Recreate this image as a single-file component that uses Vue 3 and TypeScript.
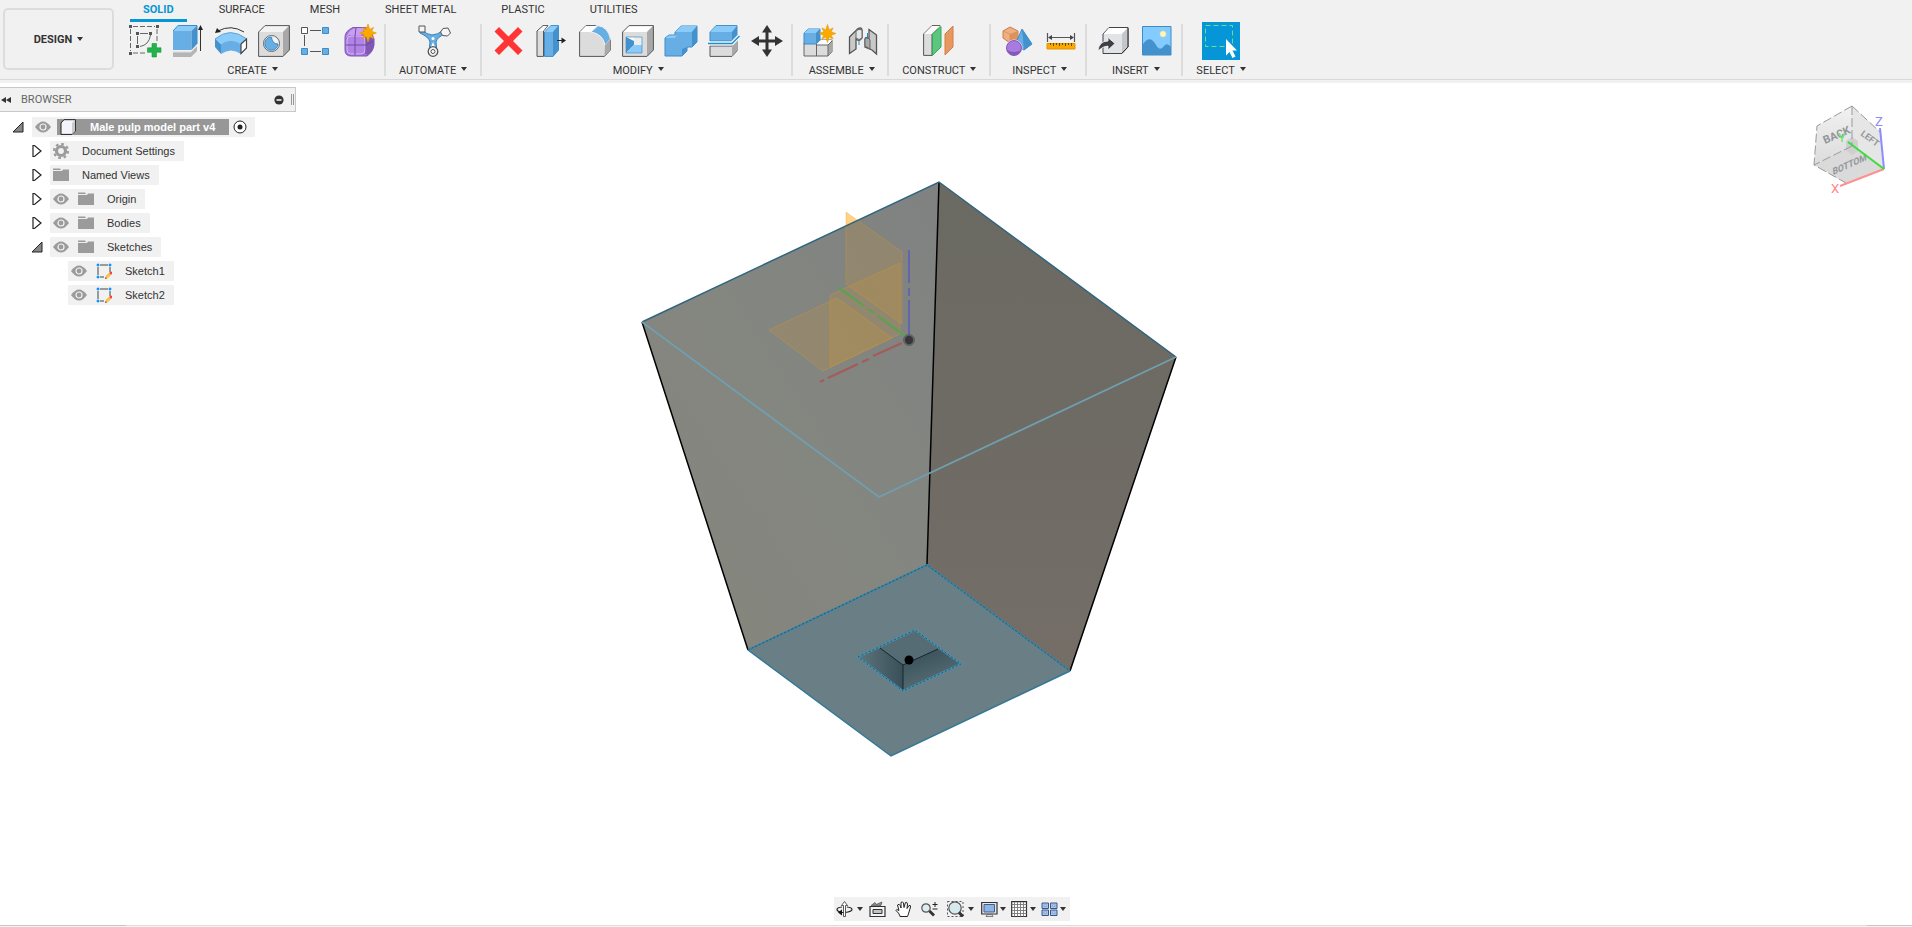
<script setup lang="ts">
import { ref } from 'vue'

interface Group {
  label: string
  kind: string
  tools: string[]
}

interface TreeRow {
  label: string
  level: number
  open: boolean | null
  icons: string[]
}

interface NavTool {
  icon: string
  label: string
  menu: boolean
}

const tabs = ['SOLID', 'SURFACE', 'MESH', 'SHEET METAL', 'PLASTIC', 'UTILITIES']
const activeTab = ref('SOLID')

const groups: Group[] = [
  { label: 'CREATE', kind: 'wide', tools: ['sketch', 'extrude', 'revolve', 'hole', 'pattern', 'form'] },
  { label: 'AUTOMATE', kind: 'single', tools: ['automate'] },
  { label: 'MODIFY', kind: 'wide', tools: ['remove', 'presspull', 'fillet', 'shell', 'combine', 'split', 'move'] },
  { label: 'ASSEMBLE', kind: 'wide', tools: ['component', 'joint'] },
  { label: 'CONSTRUCT', kind: 'single', tools: ['plane'] },
  { label: 'INSPECT', kind: 'wide', tools: ['inspect', 'measure'] },
  { label: 'INSERT', kind: 'wide', tools: ['insert', 'picture'] },
  { label: 'SELECT', kind: 'last', tools: ['select'] },
]

const rows: TreeRow[] = [
  { label: 'Document Settings', level: 1, open: false, icons: ['gear'] },
  { label: 'Named Views', level: 1, open: false, icons: ['folder'] },
  { label: 'Origin', level: 1, open: false, icons: ['eye', 'folder'] },
  { label: 'Bodies', level: 1, open: false, icons: ['eye', 'folder'] },
  { label: 'Sketches', level: 1, open: true, icons: ['eye', 'folder'] },
  { label: 'Sketch1', level: 2, open: null, icons: ['eye', 'profile'] },
  { label: 'Sketch2', level: 2, open: null, icons: ['eye', 'profile'] },
]

const navTools: NavTool[] = [
  { icon: 'orbit', label: 'Orbit', menu: true },
  { icon: 'lookat', label: 'Look at', menu: false },
  { icon: 'pan', label: 'Pan', menu: false },
  { icon: 'zoom', label: 'Zoom', menu: false },
  { icon: 'fit', label: 'Fit', menu: true },
  { icon: 'display', label: 'Display settings', menu: true },
  { icon: 'grid', label: 'Grid and snaps', menu: true },
  { icon: 'viewports', label: 'Viewports', menu: true },
]

const star = 'M0-9L1.7-3.6 5.6-5.6 3.6-1.7 8.4 0 3.6 1.7 5.6 5.6 1.7 3.6 0 9-1.7 3.6-5.6 5.6-3.6 1.7-8.4 0-3.6-1.7-5.6-5.6-1.7-3.6z'

const toolArt: Record<string, string> = {
  sketch: `<path d="M4 1.5H26M28 4V18M1.5 4V26M4 28H17" stroke="#666" stroke-dasharray="5 2" fill="none"/>
    <path d="M8.500 19V11M11 8.500H19M21.500 10Q20 20 11 21.500" stroke="#666" fill="none"/>
    <path d="M0 0h3v3H0zM27 0h3v3h-3zM0 27h3v3H0zM7 7h3v3H7zM20 7h3v3h-3zM7 20h3v3H7z" fill="#555"/>
    <path d="M23 18.500h4.500v4.300H32v4.500h-4.500V32H23v-4.700h-4.500v-4.500H23z" fill="#23b24b" stroke="#149a3c" stroke-width=".6"/>`,
  extrude: `<path d="M1 27H19L25 21V26L19 32H1z" fill="#b5b5b5"/><path d="M1 27H19L25 21" stroke="#ddd" fill="none"/>
    <path d="M1 6H19.500V25H1z" fill="#67aee5"/><path d="M1 6L6 .5H25L19.500 6z" fill="#8bcbf9"/><path d="M19.500 6L25 .5V19L19.500 25z" fill="#4492cd"/>
    <path d="M1 6L6 .5H25V19" fill="none" stroke="#3c8cc8"/><path d="M28.500 26V4" stroke="#333"/><path d="M28.500 0L31 5h-5z" fill="#222"/>`,
  revolve: `<path d="M3 6Q16-1 29 7" fill="none" stroke="#333"/><path d="M0 8L2 3 6 7z" fill="#222"/>
    <path d="M0 14Q15 1 32 14L26 20Q16 13 6 20z" fill="#8bcbf9" stroke="#3c8cc8" stroke-width=".7"/>
    <path d="M0 14L6 20V29L0 22z" fill="#4492cd"/><path d="M6 20Q16 13 26 20V29Q16 22 6 29z" fill="#67aee5"/>
    <path d="M26 19L31.500 14V23L26 28.500z" fill="#fff" stroke="#444" stroke-width="1.2"/>`,
  hole: `<path d="M.6 7L7 .6H31.400V25L25 31.400H.6z" fill="#dcdcdc"/><path d="M.6 7L7 .6H31.400L25 7z" fill="#f3f3f3"/><path d="M25 7L31.400.6V25L25 31.400z" fill="#a8a8a8"/>
    <path d="M.6 7L7 .6H31.400V25L25 31.400H.6z" fill="none" stroke="#555"/><circle cx="13.500" cy="18.500" r="8" fill="#f2f2f2" stroke="#666"/>
    <path d="M13.500 12A6.600 6.600 0 1 0 20 19Q14 19 13.500 12z" fill="#67aee5" stroke="#3c8cc8"/>`,
  pattern: `<path d="M9 5.500H20M3.500 10V21M9 26.500H20" stroke="#555"/><path d="M.5 2.500h6v6h-6z" fill="#fff" stroke="#555"/>
    <path d="M21.500 2.500h6v6h-6zM.5 23.500h6v6h-6zM21.500 23.500h6v6h-6z" fill="#67aee5" stroke="#3c8cc8"/>`,
  form: `<path d="M1 12Q1 6 9 2.500H20Q26 2 30 14V20Q29 27 23 31H7Q1 31 1 25z" fill="#a173d8" stroke="#7f57b5"/>
    <path d="M1.500 13Q6 3 12 3H21L17 10H5z" fill="#c99df2"/><path d="M22 11L30 14V20Q29 27 23 30z" fill="#7f57b5"/>
    <rect x="3" y="11" width="18" height="18" rx="4" fill="#b183e6" stroke="#d7b8f5"/><path d="M12 3L11 11V30M2 20H22L29 16M22 11V29" stroke="#6e4b9e" fill="none"/>
    <path transform="translate(24 8)" d="${star}" fill="#fbab00" stroke="#e59400" stroke-width=".6"/>`,
  automate: `<path d="M4 4Q10 10 15 10T27 5L28 9Q20 12 19 17L20 27H12L13 17Q12 12 3 8z" fill="#67aee5" stroke="#397fae"/>
    <circle cx="16" cy="13.500" r="1.500" fill="#fff"/><path d="M16 17l2 5h-4z" fill="#fff"/><circle cx="16" cy="26.500" r="4.800" fill="#f4f4f4" stroke="#555" stroke-width="1.300"/><circle cx="16" cy="26.500" r="2" fill="#fff" stroke="#555"/>
    <path d="M2 1h6v6H2zM26 3.500l5-.5 2.500 5-3 3-5-.5-2-3.500z" fill="#f5f5f5" stroke="#555"/>`,
  remove: `<path d="M6 2L15.500 11.500 25 2l4.500 4.500L20 16l9.500 9.500L25 30l-9.500-9.500L6 30l-4.500-4.500L11 16 1.500 6.500z" fill="#ff3434"/>`,
  presspull: `<path d="M1 6L7 .6H12L7.500 6V31.400H1z" fill="#dcdcdc" stroke="#555"/><path d="M2 6L7.500 1H11L7 6z" fill="#fafafa"/>
    <path d="M8.500 7L15 .6H22.500L22.500 25 17 31.400H8.500z" fill="#67aee5" stroke="#3c8cc8"/><path d="M9 7L15 1H22.500L17 7z" fill="#8bcbf9"/><path d="M17 7L22.500.6V25L17 31.400z" fill="#4492cd"/>
    <path d="M21 15.500H27" stroke="#222"/><path d="M30 15.500L25.500 12.500v6z" fill="#222"/>`,
  fillet: `<path d="M.6 7L7 .6H16Q31 6 31.400 16V25L25.500 31.400H.6z" fill="#dcdcdc" stroke="#555"/><path d="M1 7L7 1H19L12 7z" fill="#fff"/>
    <path d="M12 7L19 .6Q29 2 31.500 14L26 20Q24 9 12 7z" fill="#67aee5" stroke="#f5f5f5"/><path d="M26 20L31.400 14V25L25.500 31.400z" fill="#a8a8a8"/>`,
  shell: `<path d="M.6 7L7 .6H31.400V25L25 31.400H.6z" fill="#dcdcdc"/><path d="M.6 7L7 .6H31.400L25 7z" fill="#fff"/><path d="M25 7L31.400.6V25L25 31.400z" fill="#a8a8a8"/>
    <path d="M.6 7L7 .6H31.400V25L25 31.400H.6z" fill="none" stroke="#555"/><path d="M4 12H20V28H4z" fill="#fff"/><path d="M4 12L12 16V20L4 28z" fill="#4492cd"/><path d="M12 12H20V20H12z" fill="#eee"/><path d="M4 28L12 20H20V28z" fill="#8bcbf9"/><path d="M4 12H20V28H4z" fill="none" stroke="#3c8cc8" stroke-width=".7"/>`,
  combine: `<path d="M0 13L4 10H10V7L16 1H32V17L27 22H22V26L17 31H0z" fill="#67aee5" stroke="#3c8cc8"/>
    <path d="M.5 13L4 10.500H12L9.500 13zM10 7L16 1H32L27 7z" fill="#8bcbf9"/><path d="M27 7L32 1V17L27 22zM17 24L22 22V26L17 31z" fill="#4492cd"/>`,
  split: `<path d="M2 7L8 .6H29V11L24 16H2z" fill="#67aee5" stroke="#3c8cc8"/><path d="M2 7L8 1H29L24 7z" fill="#8bcbf9"/><path d="M24 7L29 1V10L24 16z" fill="#4492cd"/>
    <path d="M2 21H24L29 15V26L24 31.400H2z" fill="#dcdcdc" stroke="#555"/><path d="M24 21L29 15V26L24 31z" fill="#a8a8a8"/><path d="M0 18.500H24L31.500 11" fill="none" stroke="#f5f5f5" stroke-width="4"/><path d="M0 18.500H24L31.500 11" fill="none" stroke="#1590d8" stroke-width="1.300"/>`,
  move: `<path d="M16 0L21 7.500H17.500V14.500H24V11L32 16 24 21V17.500H17.500V24.500H21L16 32 11 24.500H14.500V17.500H8V21L0 16 8 11V14.500H14.500V7.500H11z" fill="#333"/>`,
  component: `<path d="M0 18L4 15H28V27L24 31H0z" fill="#dcdcdc" stroke="#666"/><path d="M12 20L17 15H28L24 20z" fill="#fff"/><path d="M24 20L28 16V27L24 31z" fill="#a8a8a8"/><path d="M12.500 19V31M13 20H24L28 16M24 20V31" fill="none" stroke="#666"/>
    <path d="M0 8L4 4H16V15L12 19H0z" fill="#67aee5" stroke="#3c8cc8"/><path d="M0 8L4 4H16L12 8z" fill="#8bcbf9"/><path d="M12 8L16 4V15L12 19z" fill="#4492cd"/>
    <path transform="translate(23.500 8.500)" d="${star}" fill="#fbab00" stroke="#e59400" stroke-width=".6"/>`,
  joint: `<path d="M2.500 12L11 3.500Q15 2 15 5V13Q12 17 9 14V24L2.500 28.500z" fill="#c9c9c9" stroke="#555" stroke-width="1.300"/><path d="M9 6Q12 3 15 5V13Q12 16 9 13z" fill="#e6e6e6" stroke="#666"/>
    <path d="M29.500 10L22 4.500V14Q19 11 18 14V22L25 25 29.500 29z" fill="#c9c9c9" stroke="#555" stroke-width="1.300"/><path d="M18 14Q20 11 23 15V24L18 21z" fill="#aaa" stroke="#666"/><path d="M12 16V20M20.500 8V14" stroke="#1590d8"/>`,
  plane: `<path d="M.6 9L9 .6H17L9 9V30.400H.6z" fill="#dcdcdc" stroke="#555"/><path d="M1 9L9 1H17L9 9z" fill="#fafafa"/><path d="M9.500 9L18 1.500V22L9.500 30.400z" fill="#5cc67f" stroke="#36a95c"/><path d="M22 9L30 1V22L22 30z" fill="#e8975f" stroke="#d07e48"/>`,
  inspect: `<path d="M1 6L8 2 16 6V14L8 18 1 13z" fill="#eeb083" stroke="#cb7d4b"/><path d="M8 9L16 6V14L8 18z" fill="#dd925d"/><path d="M1 6L8 9V18" fill="none" stroke="#d98b56" stroke-width=".7"/>
    <path d="M20 4L30 19 22 25 13 20z" fill="#67aee5" stroke="#3c8cc8"/><path d="M20 4L30 19 22 25z" fill="#4492cd"/><circle cx="12" cy="23" r="8" fill="#a97be0" stroke="#f2f2f2"/><circle cx="12" cy="23" r="7.500" fill="none" stroke="#7f57b5"/><path d="M5 25Q12 29 19 25Q17 30 12 30T5 25z" fill="#8358bb"/>`,
  measure: `<path d="M2.500 8V17M29.500 8V17M4 12.500H28" stroke="#555" stroke-width="1.200"/><path d="M3 12.500L7 10v5zM29 12.500L25 10v5z" fill="#444"/><path d="M2 18.500H30V24H2z" fill="#fba800" stroke="#e39300"/><path d="M5.500 18v2M8.500 18v3M11.500 18v2M14.500 18v3M17.500 18v2M20.500 18v3M23.500 18v2M26.500 18v3" stroke="#6b4d00"/>`,
  insert: `<path d="M5 9L11 2.500H30V22L24 28.500H5z" fill="#e2e3e6" stroke="#444"/><path d="M5.500 9L11 3H29.500L24 9z" fill="#fff"/><path d="M24 9L29.500 3V22L24 28z" fill="#c4c6cb"/><path d="M24 28L30 22V3" fill="none" stroke="#333"/>
    <path d="M0 26Q1 16 10 16V12.500L17 18.500 10 25V21Q5 21 0 26z" fill="#3d4046" stroke="#f5f5f5" stroke-width=".8"/>`,
  picture: `<path d="M1.500 1.500H30V30H1.500z" fill="#84cbff" stroke="#3c8cc8"/><path d="M2 19Q9 9 15 20Q19 27 23 21Q26 17 30 22V30H2z" fill="#4492cd"/><circle cx="22" cy="9" r="3" fill="#fff6bd" stroke="#ece09d" stroke-width=".7"/>`,
  select: `<path d="M0 0H38V38H0z" fill="#0696d7"/><path d="M3.500 3.500H30.500V24.500H3.500z" fill="none" stroke="#65e08c" stroke-dasharray="5 3"/><path d="M24 17L35 28.500H30.500L33.500 34.500 30.500 36 27.500 30 24 33.500z" fill="#fff"/>`,
}

const smallArt: Record<string, string> = {
  eye: `<path d="M0 8Q8-3 16 8Q8 19 0 8z" fill="#9b9b9b"/><circle cx="8" cy="8" r="3" fill="none" stroke="#f1f1f1" stroke-width="1.200"/>`,
  folder: `<path d="M0 1.500H7L8 3H0zM0 4H9L10 2.500H16V14H0z" fill="#9b9b9b"/><path d="M0 3.500H8.500" stroke="#eee" stroke-width=".8"/>`,
  gear: `<circle cx="8" cy="8" r="4.500" fill="none" stroke="#9b9b9b" stroke-width="3.200"/><circle cx="8" cy="8" r="7" fill="none" stroke="#9b9b9b" stroke-width="2.200" stroke-dasharray="2.750 2.748"/>`,
  profile: `<path d="M4 2H12M2 4V12M14 4V9M4 14H8" stroke="#444" fill="none"/><path d="M1 1h2v2H1zM13 1h2v2h-2zM1 13h2v2H1z" fill="#0696ff" stroke="#0696ff" stroke-width=".6"/>
    <path d="M9 16L10 12.500 13.500 9.500 15.500 11.500 12 15z" fill="#fcbd4c"/><path d="M9 16l.6-2L11 15.400z" fill="#555"/><circle cx="15" cy="10" r="1.400" fill="#f0424c"/>`,
}

const navArt: Record<string, string> = {
  orbit: `<path d="M11 6Q16 6.500 16 8.500T9 11.500H4M6 6Q1 6.500 1 8.500Q1 10 4 11" fill="none" stroke="#222" stroke-width="1.200"/><path d="M7.500 15.500V4.500H5.500L8.500 .5 11.500 4.500H9.500V15.500z" fill="#fff" stroke="#333" stroke-width=".8"/><path d="M2 11.500L6 8.500V14.500z" fill="#111"/>`,
  lookat: `<path d="M1 5.500H16V15.500H1z" fill="#f4f4f4" stroke="#333" stroke-width="1.200"/><path d="M4 8.500H13V12.500H4z" fill="#bfc4cc" stroke="#333"/><path d="M2 4.500L6 1.500 7 3.500 13 1 12 4.500z" fill="#888" stroke="#444" stroke-width=".6"/>`,
  pan: `<path d="M5 15Q4 12 1 9.500Q1 7.500 4 9.500L2.500 4Q4 2 5.500 5L6 7 6 1.500Q7.500 0 8.500 2L9 6.500 10.500 1.500Q12 .5 12.500 3L12 7.500 14 4.500Q16 4 15.500 6L14 11Q13.500 13 12.500 15.500H5z" fill="#fff" stroke="#222"/>`,
  zoom: `<circle cx="5" cy="7" r="4.200" fill="#dcecf1" stroke="#555" stroke-width="1.200"/><path d="M8.500 10L13 14.500" stroke="#333" stroke-width="2.800"/><path d="M11.500 3.500h5M14 1v5M11.500 8h5" stroke="#222"/>`,
  fit: `<path d="M.5.500H16V15.500H.5z" fill="none" stroke="#555" stroke-dasharray="2 2"/><circle cx="8" cy="7" r="6.200" fill="#d6e9ec" stroke="#555" stroke-width="1.200"/><path d="M12 11.500L16 15.500" stroke="#333" stroke-width="3"/>`,
  display: `<path d="M.7 1.500H16V13H.7z" fill="#e8e8e8" stroke="#333" stroke-width="1.200"/><path d="M3 3.500H13.500V11H3z" fill="#8fb4e3" stroke="#3b5f93"/><path d="M6 13.500H11L12 15.500H5z" fill="#ddd" stroke="#555" stroke-width=".7"/>`,
  grid: `<path d="M.7.700H15.500V15.500H.7z" fill="#fff" stroke="#333" stroke-width="1.200"/><path d="M3.500 1V15.500M6.500 1V15.500M9.500 1V15.500M12.500 1V15.500M1 3.500H15.500M1 6.500H15.500M1 9.500H15.500M1 12.500H15.500" stroke="#777" stroke-width=".9"/>`,
  viewports: `<path d="M1 2h6.500V7.500H1zM9.500 2H16V7.500H9.500zM1 9h6.500v5.500H1zM9.500 9H16v5.500H9.500z" fill="#a9c4ea" stroke="#3a5788"/><path d="M3 4h2.500v1.500H3zM11.500 4H14v1.500h-2.500zM3 11h2.500v1.500H3zM11.500 11H14v1.500h-2.500z" fill="#dfeaf8" stroke="#6f92c4" stroke-width=".6"/>`,
}
</script>

<template>
  <div class="app">
    <header class="toolbar">
      <button class="workspace" type="button">DESIGN<i class="caret"></i></button>
      <div class="ribbon">
        <nav class="tabs">
          <button
            v-for="tab in tabs"
            :key="tab"
            type="button"
            class="tab"
            :class="{ active: tab === activeTab }"
            @click="activeTab = tab"
          >{{ tab }}</button>
        </nav>
        <div class="groups">
          <section v-for="group in groups" :key="group.label" class="group" :class="group.kind">
            <div class="tools">
              <button v-for="tool in group.tools" :key="tool" class="tool" type="button" :aria-label="tool">
                <svg v-if="tool === 'select'" class="big" viewBox="0 0 38 38" v-html="toolArt[tool]"></svg>
                <svg v-else viewBox="0 0 32 32" v-html="toolArt[tool]"></svg>
              </button>
            </div>
            <button class="group-label" type="button">{{ group.label }}<i class="caret"></i></button>
          </section>
        </div>
      </div>
    </header>

    <main class="workspace-area">
      <svg class="model" viewBox="0 81 1912 845" aria-label="3D model">
        <defs>
          <linearGradient id="faceLeft" x1="0" y1="1" x2="1" y2="0">
            <stop offset="0" stop-color="#85857c" />
            <stop offset=".5" stop-color="#848680" />
            <stop offset="1" stop-color="#7f8281" />
          </linearGradient>
          <linearGradient id="faceRight" x1="0" y1="0" x2="0" y2="1">
            <stop offset="0" stop-color="#6b6a62" />
            <stop offset=".5" stop-color="#6e6b64" />
            <stop offset="1" stop-color="#746e67" />
          </linearGradient>
          <linearGradient id="pocketLeft" x1="0" y1="0" x2="1" y2="0">
            <stop offset="0" stop-color="#5f747a" />
            <stop offset="1" stop-color="#39505a" />
          </linearGradient>
          <linearGradient id="pocketRight" x1="0" y1="0" x2=".5" y2="1">
            <stop offset="0" stop-color="#344b56" />
            <stop offset="1" stop-color="#5b7076" />
          </linearGradient>
        </defs>
        <polygon points="939,183 642,323 748,651 927,566" fill="url(#faceLeft)" />
        <polygon points="939,183 1176,358 1070,672 927,566" fill="url(#faceRight)" />
        <polygon points="927,566 748,651 891,757 1070,672" fill="#697f85" />

        <polygon points="846,213 857,221 846,227" fill="#ffdb99" />
        <g fill="#ffa500" fill-opacity=".13" stroke="#e09a20" stroke-opacity=".3">
          <polygon points="846,213 902,253 902,325 846,285" />
          <polygon points="830,296 900,264 900,335 830,368" />
          <polygon points="769,331 837,299 892,339 823,372" />
        </g>

        <path d="M939 183L927 566M642 323L748 651M1176 358L1070 672" stroke="#000" stroke-width="1.5" />
        <path d="M642 323L939 183 1176 358" fill="none" stroke="#2f657f" stroke-width="1.5" />
        <path d="M642 323L879 498 1176 358" fill="none" stroke="#6f9fb1" stroke-width="1.800" />
        <path d="M748 651L891 757 1070 672" fill="none" stroke="#337896" stroke-width="1.500" />
        <path d="M748 651L927 566 1070 672" fill="none" stroke="#3d87a8" stroke-width="2" />
        <path d="M748 651L927 566 1070 672" fill="none" stroke="#24566d" stroke-dasharray="2 2" />

        <polygon points="858,658 915,631 961,665 903,692" fill="#566c75" />
        <polygon points="858,658 880,649 903,666 903,692" fill="url(#pocketLeft)" />
        <polygon points="903,666 938,650 961,665 903,692" fill="url(#pocketRight)" />
        <path d="M880 649L903 666 938 650M903 666V692" fill="none" stroke="#14262f" />
        <polygon points="858,658 915,631 961,665 903,692" fill="none" stroke="#4991b0" stroke-width="2" />
        <polygon points="858,658 915,631 961,665 903,692" fill="none" stroke="#24566d" stroke-dasharray="2 2" />
        <circle cx="909" cy="661" r="4.500" fill="#000" />

        <path d="M909 251V284M909 289V297M909 301V336" stroke="#6464a8" stroke-width="2" />
        <path d="M838 288L864 307M868 310L874 314M878 317L905 337" stroke="#55a54a" stroke-width="2" />
        <path d="M902 344L873 357M869 360L862 363M858 365L828 379M824 381L820 383" stroke="#a65a59" stroke-width="2" />
        <circle cx="909" cy="341" r="5.500" fill="#686a69" stroke="#555" stroke-width=".7" />
        <circle cx="909" cy="341" r="4.200" fill="#37373b" />
      </svg>

      <div class="panels">
        <aside class="browser">
          <header class="browser-head">
            <svg class="rewind" viewBox="0 0 12 8"><path d="M1 4L6 1V7zM6 4L11 1V7z" fill="#333" /></svg>
            <span>BROWSER</span>
            <svg class="minimize" viewBox="0 0 10 10"><circle cx="5" cy="5" r="4.600" fill="#333" /><path d="M2.500 5h5" stroke="#fff" stroke-width="1.500" /></svg>
            <i class="grip"></i>
          </header>
          <ul class="tree">
            <li class="row root">
              <svg class="twisty" viewBox="0 0 12 12"><path d="M11 1V11H1z" fill="#888" stroke="#222" /></svg>
              <div class="node">
                <svg class="small" viewBox="0 0 16 16" v-html="smallArt.eye"></svg>
                <span class="document">
                  <svg class="small" viewBox="0 0 16 16">
                    <path d="M1 4L4 .700H15.400V12L12 15.400H1z" fill="#f4f5fa" stroke="#222" />
                    <path d="M12 4L15 1V12L12 15z" fill="#c9cbd3" />
                  </svg>
                  <b>Male pulp model part v4</b>
                </span>
                <svg class="target" viewBox="0 0 14 14"><circle cx="7" cy="7" r="6" fill="#fff" stroke="#222" /><circle cx="7" cy="7" r="2.500" fill="#222" /></svg>
              </div>
            </li>
            <li v-for="row in rows" :key="row.label" class="row" :class="'level' + row.level">
              <svg v-if="row.open === true" class="twisty" viewBox="0 0 12 12"><path d="M11 1V11H1z" fill="#888" stroke="#222" /></svg>
              <svg v-else-if="row.open === false" class="twisty" viewBox="0 0 12 14"><path d="M2 1.500H3.500L10 7 3.500 12.500H2z" fill="#fff" stroke="#222" stroke-width="1.200" /></svg>
              <div class="node">
                <svg v-for="icon in row.icons" :key="icon" class="small" viewBox="0 0 16 16" v-html="smallArt[icon]"></svg>
                <span class="name">{{ row.label }}</span>
              </div>
            </li>
          </ul>
        </aside>

        <svg class="cube" viewBox="1800 96 100 104" aria-label="View cube">
          <defs>
            <linearGradient id="cubeBack" x1="0" y1="0" x2="0" y2="1">
              <stop offset="0" stop-color="#f1f1f1" />
              <stop offset="1" stop-color="#dcdcdc" />
            </linearGradient>
          </defs>
          <polygon points="1852,106 1817,126 1814,165 1852,146" fill="url(#cubeBack)" />
          <polygon points="1852,106 1880,132 1884,169 1852,146" fill="#e6e6e6" />
          <polygon points="1852,146 1814,165 1846,183 1884,169" fill="#dadada" />
          <polygon points="1846,141 1852,137 1858,141 1858,151 1852,155 1846,150" fill="#cfcfcf" />
          <path d="M1852 106L1817 126 1814 165 1846 183M1852 106L1880 132M1852 106V146M1852 146L1814 165" fill="none" stroke="#999" stroke-dasharray="9 3" />
          <g class="face">
            <text class="back" transform="translate(1825 144) rotate(-23)">BACK</text>
            <text transform="translate(1860 135) rotate(36)">LEFT</text>
            <text transform="translate(1833 175) rotate(-24) skewX(-20)">BOTTOM</text>
          </g>
          <path d="M1880 128L1884 169" stroke="#8c8cfa" stroke-width="2" />
          <path d="M1884 169L1840 186" stroke="#ff9090" stroke-width="2" />
          <path d="M1884 169L1848 142" stroke="#3fdc3f" stroke-width="2" />
          <g class="axis">
            <text x="1875" y="126" fill="#8c8cfa">Z</text>
            <text x="1831" y="193" fill="#ff8585">X</text>
            <text x="1838" y="142" fill="#62e562">Y</text>
          </g>
        </svg>
      </div>

      <div class="nav-wrap">
        <nav class="navbar">
          <button v-for="item in navTools" :key="item.icon" type="button" class="nav-tool" :class="item.icon" :aria-label="item.label">
            <svg viewBox="0 0 17 16" v-html="navArt[item.icon]"></svg>
            <i v-if="item.menu" class="caret"></i>
          </button>
        </nav>
      </div>
    </main>
    <footer class="edge"><i class="edge-left"></i><i class="edge-right"></i></footer>
  </div>
</template>

<style>
body {
  margin: 0;
  background: #fff;
}
</style>

<style scoped>
.app {
  min-height: 100vh;
  display: flex;
  flex-direction: column;
  font-family: Roboto, "Liberation Sans", sans-serif;
  font-size: 11px;
  line-height: 14px;
  color: #333;
}
button {
  border: 0;
  padding: 0;
  margin: 0;
  background: none;
  font: inherit;
  color: inherit;
  white-space: nowrap;
}
svg {
  display: block;
  flex: none;
}
.caret {
  display: inline-block;
  border: 3px solid transparent;
  border-top: 4px solid #333;
  border-bottom: 0;
  margin-left: 5px;
  vertical-align: 2px;
}
.toolbar {
  display: flex;
  align-items: flex-start;
  background: #f1f1f1;
  border-bottom: 1px solid #d8d8d8;
  box-shadow: 0 3px 0 #f1f1f1;
  height: 79px;
}
.workspace {
  margin: 8px 4px 0 3px;
  padding-top: 2px;
  width: 111px;
  height: 62px;
  border: 2px solid #dcdcdc;
  border-radius: 5px;
  font-weight: 700;
}
.tabs {
  display: flex;
  gap: 19px;
  padding-left: 12px;
  height: 22px;
}
.tab {
  padding: 0 13px;
  height: 22px;
  border-bottom: 3px solid transparent;
}
.tab.active {
  color: #0696d7;
  font-weight: 700;
  border-bottom-color: #0696d7;
}
.groups {
  display: flex;
  margin-top: 2px;
}
.group {
  display: flex;
  flex-direction: column;
  align-items: center;
  height: 52px;
  padding: 0 8px 0 11px;
  border-right: 2px solid #dcdcdc;
}
.group.single {
  padding: 0 13px;
}
.group.last {
  padding: 0 13px;
  border-right: 0;
}
.tools {
  display: flex;
  gap: 11px;
  margin-top: 1px;
}
.tool,
.tool svg {
  width: 32px;
  height: 32px;
}
.tool svg {
  overflow: visible;
}
.tool svg.big {
  width: 38px;
  height: 38px;
  margin: -3px;
}
.group-label {
  margin-top: 7px;
}
.group-label .caret {
  vertical-align: 3px;
}
.workspace-area {
  position: relative;
  flex: 1;
  display: flex;
  flex-direction: column;
}
.model {
  position: absolute;
  inset: 0;
  width: 100%;
  height: 100%;
}
.panels {
  position: relative;
  flex: 1;
  display: flex;
  justify-content: space-between;
  align-items: flex-start;
  padding: 7px 12px 0 0;
}
.browser {
  width: 296px;
}
.browser-head {
  display: flex;
  align-items: center;
  height: 23px;
  border: 1px solid #c8c8c8;
  border-left: 0;
  background: #f1f1f1;
  color: #666;
}
.rewind {
  width: 12px;
  height: 8px;
  margin-right: 9px;
}
.minimize {
  width: 10px;
  height: 10px;
  margin-left: auto;
}
.grip {
  width: 1px;
  height: 11px;
  margin: 0 1px 0 7px;
  border: 1px solid #999;
  border-width: 0 1px;
}
.tree {
  list-style: none;
  margin: 5px 0 0;
  padding: 0;
  display: flex;
  flex-direction: column;
  gap: 4px;
  font-family: "Liberation Sans", Arial, sans-serif;
}
.row {
  display: flex;
  align-items: center;
  height: 20px;
}
.row.root {
  padding-left: 12px;
}
.row.root .twisty {
  margin-right: 8px;
}
.row.level1 {
  padding-left: 31px;
}
.row.level2 {
  padding-left: 68px;
}
.twisty {
  width: 12px;
  height: 14px;
  margin-right: 7px;
}
.node {
  display: flex;
  align-items: center;
  gap: 9px;
  height: 20px;
  padding: 0 9px 0 3px;
  background: #f1f1f1;
}
.root .node {
  gap: 6px;
  padding-right: 8px;
}
.small {
  width: 16px;
  height: 16px;
}
.name {
  margin-left: 4px;
}
.document {
  display: flex;
  align-items: center;
  gap: 14px;
  height: 16px;
  padding: 0 14px 0 3px;
  background: #979797;
  color: #fff;
}
.target {
  width: 14px;
  height: 14px;
  margin-left: -2px;
}
.cube {
  width: 100px;
  height: 104px;
  margin-top: 9px;
}
.face {
  font: 700 9px Roboto, sans-serif;
  fill: #92969b;
}
.face .back {
  font-size: 11px;
}
.axis {
  font: 13px Roboto, sans-serif;
}
.nav-wrap {
  position: relative;
  display: flex;
  justify-content: center;
  padding: 0 8px 4px 0;
}
.navbar {
  display: flex;
  align-items: center;
  gap: 9px;
  height: 24px;
  padding: 0 4px 0 2px;
  background: #f1f1f1;
}
.nav-tool {
  display: flex;
  align-items: center;
}
.nav-tool svg {
  width: 17px;
  height: 16px;
}
.nav-tool .caret {
  margin-left: 4px;
}
.nav-tool.lookat {
  margin-left: -3px;
}
.nav-tool.display {
  margin-left: -2px;
}
.nav-tool.grid,
.nav-tool.viewports {
  margin-left: -4px;
}
.nav-tool.display .caret,
.nav-tool.grid .caret,
.nav-tool.viewports .caret {
  margin-left: 2px;
}
.edge {
  display: flex;
  justify-content: space-between;
  height: 1px;
  border-bottom: 1px solid #f3f3f3;
  background: #dedede;
}
.edge i {
  height: 1px;
  background: #c6c6c6;
}
.edge-left {
  width: 126px;
}
.edge-right {
  width: 45px;
}
</style>
